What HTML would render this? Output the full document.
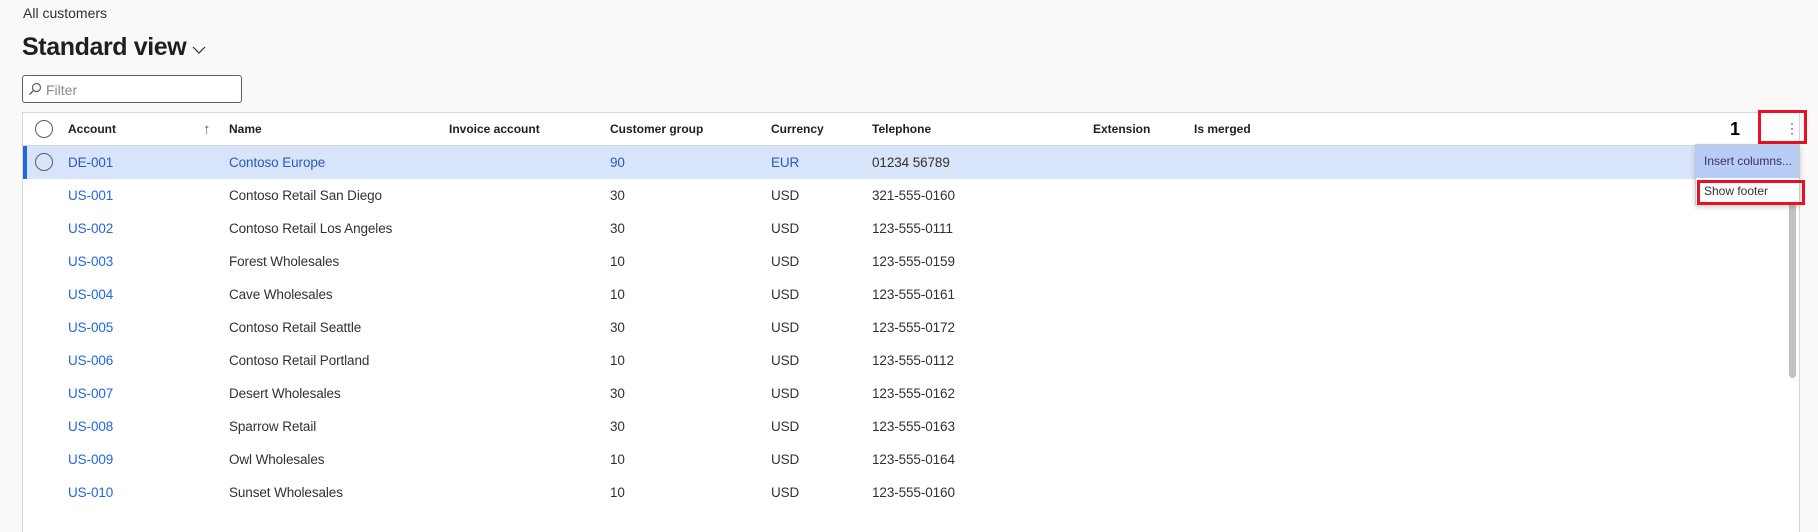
<!DOCTYPE html>
<html><head><meta charset="utf-8"><style>
*{box-sizing:border-box;margin:0;padding:0}
body{width:1818px;height:518px;background:#faf9f8;font-family:"Liberation Sans",sans-serif;position:relative;overflow:hidden;color:#323130}
.a{position:absolute;white-space:nowrap}
.tbl{position:absolute;left:22px;top:112px;width:1778px;height:420px;background:#fff;border:1px solid #d6d6d6;border-bottom:none}
.hdr{position:absolute;left:0;top:0;width:100%;height:33px;border-bottom:1px solid #d6d6d6;font-size:12px;color:#201f1e;font-weight:bold}
.row{position:absolute;left:0;width:100%;height:33px;font-size:13.5px;letter-spacing:-0.1px}
.row span,.hdr span{position:absolute;top:0;line-height:33px}
.circ{position:absolute;left:12px;top:7px;width:18px;height:18px;border:1.3px solid #605e5c;border-radius:50%}
.lk{color:#2266e3}
.sel{background:#d8e4fa}
.sel .lk{color:#2a5bb8}
</style></head><body>
<div class="a" style="left:23px;top:5px;font-size:14px;color:#323130">All customers</div>
<div class="a" style="left:22px;top:33px;font-size:25px;color:#201f1e;letter-spacing:-0.4px;font-weight:bold">Standard view<svg width="14" height="10" style="margin-left:6px" viewBox="0 0 14 10"><path d="M1 2l6 6 6-6" fill="none" stroke="#323130" stroke-width="1.2"/></svg></div>
<div class="a" style="left:22px;top:75px;width:220px;height:28px;border:1px solid #605e5c;border-radius:3px;background:#fff">
<svg width="14" height="14" style="position:absolute;left:5px;top:6px" viewBox="0 0 14 14"><circle cx="8.5" cy="5.5" r="4" fill="none" stroke="#605e5c" stroke-width="1.2"/><path d="M5.5 8.5L1.5 12.5" stroke="#605e5c" stroke-width="1.3"/></svg>
<span style="position:absolute;left:23px;top:6px;font-size:14px;color:#8a8886">Filter</span></div>
<div class="tbl">
<div class="hdr"><div class="circ"></div>
<span style="left:45px">Account</span><span style="left:180px;font-weight:normal;color:#605e5c;font-size:15px">↑</span>
<span style="left:206px">Name</span><span style="left:426px">Invoice account</span><span style="left:587px">Customer group</span><span style="left:748px">Currency</span><span style="left:849px">Telephone</span><span style="left:1070px">Extension</span><span style="left:1171px">Is merged</span>
<span style="left:1707px;font-size:18px;color:#000">1</span>
<span style="left:1762px;font-weight:normal;color:#605e5c;font-size:14px;line-height:31px">⋮</span>
</div>
<div class="row sel" style="top:33px"><div style="position:absolute;left:0;top:0;width:4px;height:33px;background:#2266e3"></div><div class="circ"></div><span class="lk" style="left:45px">DE-001</span><span class="lk" style="left:206px">Contoso Europe</span><span class="lk" style="left:587px">90</span><span class="lk" style="left:748px">EUR</span><span style="left:849px">01234 56789</span></div>
<div class="row" style="top:66px"><span class="lk" style="left:45px">US-001</span><span style="left:206px">Contoso Retail San Diego</span><span style="left:587px">30</span><span style="left:748px">USD</span><span style="left:849px">321-555-0160</span></div>
<div class="row" style="top:99px"><span class="lk" style="left:45px">US-002</span><span style="left:206px">Contoso Retail Los Angeles</span><span style="left:587px">30</span><span style="left:748px">USD</span><span style="left:849px">123-555-0111</span></div>
<div class="row" style="top:132px"><span class="lk" style="left:45px">US-003</span><span style="left:206px">Forest Wholesales</span><span style="left:587px">10</span><span style="left:748px">USD</span><span style="left:849px">123-555-0159</span></div>
<div class="row" style="top:165px"><span class="lk" style="left:45px">US-004</span><span style="left:206px">Cave Wholesales</span><span style="left:587px">10</span><span style="left:748px">USD</span><span style="left:849px">123-555-0161</span></div>
<div class="row" style="top:198px"><span class="lk" style="left:45px">US-005</span><span style="left:206px">Contoso Retail Seattle</span><span style="left:587px">30</span><span style="left:748px">USD</span><span style="left:849px">123-555-0172</span></div>
<div class="row" style="top:231px"><span class="lk" style="left:45px">US-006</span><span style="left:206px">Contoso Retail Portland</span><span style="left:587px">10</span><span style="left:748px">USD</span><span style="left:849px">123-555-0112</span></div>
<div class="row" style="top:264px"><span class="lk" style="left:45px">US-007</span><span style="left:206px">Desert Wholesales</span><span style="left:587px">30</span><span style="left:748px">USD</span><span style="left:849px">123-555-0162</span></div>
<div class="row" style="top:297px"><span class="lk" style="left:45px">US-008</span><span style="left:206px">Sparrow Retail</span><span style="left:587px">30</span><span style="left:748px">USD</span><span style="left:849px">123-555-0163</span></div>
<div class="row" style="top:330px"><span class="lk" style="left:45px">US-009</span><span style="left:206px">Owl Wholesales</span><span style="left:587px">10</span><span style="left:748px">USD</span><span style="left:849px">123-555-0164</span></div>
<div class="row" style="top:363px"><span class="lk" style="left:45px">US-010</span><span style="left:206px">Sunset Wholesales</span><span style="left:587px">10</span><span style="left:748px">USD</span><span style="left:849px">123-555-0160</span></div>
</div>
<div class="a" style="left:1789px;top:180px;width:7px;height:198px;background:#c2c2c2;border-radius:0 0 4px 4px"></div>
<div class="a" style="left:1758px;top:110px;width:49px;height:34px;border:3px solid #e81123"></div>
<div class="a" style="left:1695px;top:144px;width:105px;height:61px;background:#fff;border:1px solid #c8c8c8;box-shadow:0 2px 5px rgba(0,0,0,.2)">
<div style="height:33px;background:#b8cdf5;font-size:12px;line-height:33px;padding-left:8px;color:#3b2c6b">Insert columns...</div>
<div style="font-size:12px;line-height:26px;padding-left:8px;color:#323130">Show footer</div></div>
<div class="a" style="left:1697px;top:180px;width:108px;height:25px;border:3px solid #e81123"></div>
</body></html>
